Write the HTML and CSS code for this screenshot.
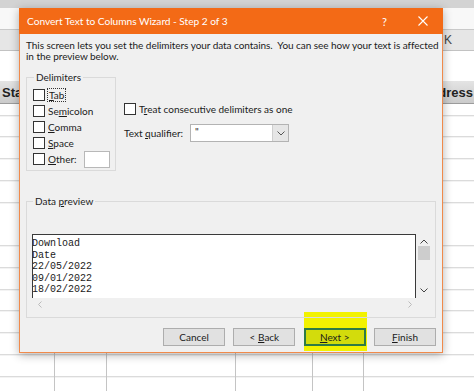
FILE: index.html
```html
<!DOCTYPE html>
<html lang="en">
<head>
    <meta charset="UTF-8">
    <title>Convert Text to Columns Wizard</title>
    <link rel="stylesheet" href="styles.css">
</head>
<body>
    <div class="sheet">
        <div class="band"></div>
        <div class="row-top"></div>
        <div class="colhead"><span class="colletter">K</span></div>
        <div class="row-blank"></div>
        <div class="thead">
            <span>Sta</span>
            <span>dress</span>
        </div>
        <div class="cells"></div>
    </div>

    <div class="dialog">
        <div class="titlebar">
            <span class="title">Convert Text to Columns Wizard - Step 2 of 3</span>
            <span class="help">?</span>
            <svg class="close" width="10" height="10" viewBox="0 0 10 10">
                <path d="M0.5 0.5 L9.5 9.5 M9.5 0.5 L0.5 9.5" stroke="#fff" stroke-width="1.1" fill="none"/>
            </svg>
        </div>

        <div class="dlg-body">
            <p class="intro">This screen lets you set the delimiters your data contains.&nbsp; You can see how your text is affected<br>in the preview below.</p>

            <div class="options">
                <fieldset class="group delims">
                    <legend>Delimiters</legend>
                    <div class="check"><span class="box"></span><span class="focus"><u>T</u>ab</span></div>
                    <div class="check"><span class="box"></span><span>Se<u>m</u>icolon</span></div>
                    <div class="check"><span class="box"></span><span><u>C</u>omma</span></div>
                    <div class="check"><span class="box"></span><span><u>S</u>pace</span></div>
                    <div class="check"><span class="box"></span><span class="other-label"><u>O</u>ther:</span><span class="other-input"></span></div>
                </fieldset>

                <div class="side">
                    <div class="check"><span class="box"></span><span>T<u>r</u>eat consecutive delimiters as one</span></div>
                    <div class="qualifier">
                        <span>Text <u>q</u>ualifier:</span>
                        <div class="combo">
                            <span class="combo-value">"</span>
                            <span class="combo-btn">
                                <svg width="8" height="5" viewBox="0 0 8 5"><path d="M0.5 0.5 L4 4 L7.5 0.5" stroke="#555" fill="none"/></svg>
                            </span>
                        </div>
                    </div>
                </div>
            </div>

            <fieldset class="group preview">
                <legend>Data <u>p</u>review</legend>
                <div class="preview-area">
                    <div class="listbox">
                        <div>Download</div>
                        <div>Date</div>
                        <div>22/05/2022</div>
                        <div>09/01/2022</div>
                        <div>18/02/2022</div>
                    </div>
                    <div class="vscroll">
                        <svg width="8" height="5" viewBox="0 0 8 5"><path d="M0.5 4.5 L4 1 L7.5 4.5" stroke="#444" fill="none"/></svg>
                        <span class="thumb"></span>
                        <svg class="down" width="8" height="5" viewBox="0 0 8 5"><path d="M0.5 0.5 L4 4 L7.5 0.5" stroke="#444" fill="none"/></svg>
                    </div>
                </div>
                <div class="hscroll">
                    <svg width="4" height="7" viewBox="0 0 4 7"><path d="M3.5 0.5 L0.5 3.5 L3.5 6.5" stroke="#bbb" fill="none"/></svg>
                    <svg width="4" height="7" viewBox="0 0 4 7"><path d="M0.5 0.5 L3.5 3.5 L0.5 6.5" stroke="#bbb" fill="none"/></svg>
                </div>
            </fieldset>

            <div class="buttons">
                <button>Cancel</button>
                <button>&lt; <u>B</u>ack</button>
                <button class="next"><u>N</u>ext &gt;</button>
                <button><u>F</u>inish</button>
            </div>
        </div>
    </div>
</body>
</html>
```

FILE: styles.css
```css
body {
    margin: 0;
    width: 474px;
    height: 391px;
    overflow: hidden;
    position: relative;
    background: #fff;
    font-family: Lato, "Noto Sans", sans-serif;
    color: #1b1b1b;
}

/* spreadsheet behind the dialog */
.band {
    height: 8px;
    background: #d3d3d3;
}
.row-top {
    height: 21px;
    background: #f8f8f8;
    border-bottom: 1px solid #c9c9c9;
}
.colhead {
    height: 20px;
    background: #e6e6e6;
    border-bottom: 1px solid #c2c2c2;
    display: flex;
    justify-content: flex-end;
    align-items: center;
}
.colletter {
    font-family: "Liberation Sans", Arial, sans-serif;
    font-size: 12px;
    color: #444;
    width: 30px;
}
.row-blank {
    height: 30px;
    background: #fff;
}
.thead {
    height: 22px;
    background: linear-gradient(#e4e4e4, #cbcbcb);
    border-bottom: 1px solid #9c9c9c;
    display: flex;
    justify-content: space-between;
    align-items: center;
    font-family: "Liberation Sans", Arial, sans-serif;
    font-weight: bold;
    font-size: 13px;
    color: #222;
    padding: 0 1px 0 2px;
}
.cells {
    height: 287px;
    background-image:
        linear-gradient(to right,
            transparent 0 54px, #c4c4c4 54px 55px,
            transparent 55px 106px, #c4c4c4 106px 107px,
            transparent 107px 235px, #c4c4c4 235px 236px,
            transparent 236px 312px, #c4c4c4 312px 313px,
            transparent 313px 363px, #c4c4c4 363px 364px,
            transparent 364px),
        repeating-linear-gradient(to bottom, transparent 0 20.75px, #cfcfcf 20.75px 21.75px);
    background-position: 0 0, 0 -9.75px;
}

/* dialog */
.dialog {
    position: absolute;
    left: 19px;
    top: 8px;
    width: 424px;
    height: 345px;
    box-sizing: border-box;
    background: #f0f0f0;
    border: 1px solid #f08a4b;
    border-top: none;
    box-shadow: 0 2px 9px rgba(0, 0, 0, 0.3);
    z-index: 1;
    font-size: 10px;
}
.titlebar {
    height: 26px;
    margin: 0 -1px;
    background: #f36a16;
    color: #fff;
    display: flex;
    align-items: center;
    padding-left: 8px;
}
.title {
    font-size: 10.2px;
    letter-spacing: -0.05px;
    flex: 1;
}
.help {
    font-size: 11px;
    margin-right: 31px;
}
.close {
    margin-right: 15px;
}

.dlg-body {
    padding: 0 6px;
}
.intro {
    margin: 6px 0 0;
    line-height: 11px;
    white-space: nowrap;
    letter-spacing: -0.05px;
}

.options {
    display: flex;
    margin-top: 9px;
}
.group {
    margin: 0;
    border: 1px solid #dadada;
    border-radius: 0;
}
.group legend {
    padding: 0 2px;
    margin-left: 1px;
    line-height: 12px;
}
.delims {
    width: 90px;
    height: 100px;
    box-sizing: border-box;
    padding: 4px 0 0 6px;
}
.check {
    display: flex;
    align-items: center;
    height: 16px;
    gap: 3px;
}
.box {
    width: 10px;
    height: 10px;
    border: 1px solid #333;
    background: #fff;
    flex: none;
}
.focus {
    outline: 1px dotted #333;
    padding: 0 1px;
}
.other-label {
    width: 33px;
}
.other-input {
    width: 24px;
    height: 15px;
    border: 1px solid #b8b8b8;
    background: #fff;
}

.side {
    margin-left: 8px;
    padding-top: 30px;
}
.qualifier {
    display: flex;
    align-items: center;
    margin-top: 7px;
}
.qualifier > span {
    width: 66px;
}
.combo {
    width: 99px;
    height: 18px;
    box-sizing: border-box;
    border: 1px solid #b3b3b3;
    background: #fff;
    display: flex;
}
.combo-value {
    flex: 1;
    padding-left: 4px;
    line-height: 12px;
}
.combo-btn {
    width: 15px;
    background: #e6e6e6;
    border-left: 1px solid #cfcfcf;
    display: flex;
    align-items: center;
    justify-content: center;
}

.preview {
    margin-top: 24px;
    height: 123px;
    box-sizing: border-box;
    padding: 27px 0 0 5px;
}
.preview-area {
    display: flex;
}
.listbox {
    width: 384px;
    height: 64px;
    box-sizing: border-box;
    border: 1px solid #3a3a3a;
    border-bottom: none;
    background: #fff;
    font-family: "Liberation Mono", "Courier New", monospace;
    font-size: 10px;
    line-height: 11.6px;
    padding-top: 3px;
    text-indent: -1px;
    overflow: hidden;
}
.vscroll {
    width: 15px;
    display: flex;
    flex-direction: column;
    align-items: center;
    padding-top: 5px;
}
.thumb {
    width: 12px;
    height: 14px;
    background: #cdcdcd;
    margin-top: 2px;
}
.vscroll .down {
    margin-top: auto;
    margin-bottom: 5px;
}
.hscroll {
    width: 384px;
    height: 12px;
    display: flex;
    justify-content: space-between;
    align-items: center;
    padding: 0 4px 0 6px;
    box-sizing: border-box;
}

.buttons {
    display: flex;
    justify-content: flex-end;
    gap: 8.3px;
    margin-top: 10px;
}
button {
    width: 62px;
    height: 18px;
    padding: 0;
    font-family: Lato, "Noto Sans", sans-serif;
    font-size: 10px;
    color: #1b1b1b;
    background: #e1e1e1;
    border: 1px solid #adadad;
}
button.next {
    position: relative;
    background: #d3dc0c;
    border: 2px solid #2e7b45;
}
button.next::before {
    content: '';
    position: absolute;
    left: -2px;
    right: -3px;
    top: -18px;
    bottom: -7px;
    background: #f2f200;
    z-index: -1;
}
```
